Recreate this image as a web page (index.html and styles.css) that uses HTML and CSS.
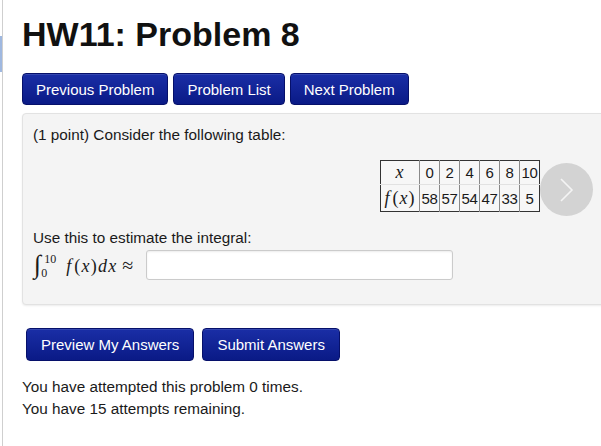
FILE: index.html
```html
<!DOCTYPE html>
<html>
<head>
<meta charset="utf-8">
<link rel="stylesheet" href="styles.css">
</head>
<body>
<div class="edge-mark"></div>
<div class="page">
  <h1 class="title">HW11: Problem 8</h1>
  <div class="nav">
    <button class="btn">Previous Problem</button>
    <button class="btn">Problem List</button>
    <button class="btn">Next Problem</button>
  </div>
  <div class="panel">
    <p class="line">(1 point) Consider the following table:</p>
    <table class="data">
      <tr class="r1">
        <td class="head"><span class="m">x</span></td>
        <td>0</td><td>2</td><td>4</td><td>6</td><td>8</td><td>10</td>
      </tr>
      <tr class="r2">
        <td class="head"><span class="m fx">f</span><span class="mp">(</span><span class="m">x</span><span class="mp">)</span></td>
        <td>58</td><td>57</td><td>54</td><td>47</td><td>33</td><td>5</td>
      </tr>
    </table>
    <p class="line use">Use this to estimate the integral:</p>
    <div class="integral">
      <span class="expr">
        <span class="int">∫</span>
        <span class="limits"><span class="sup">10</span><span class="sub">0</span></span>
        <span class="body"><span class="m fx">f</span><span class="mp">(</span><span class="m">x</span><span class="mp">)</span><span class="m">d</span><span class="m">x</span><span class="approx">≈</span></span>
      </span>
      <input class="answer" type="text">
    </div>
  </div>
  <div class="actions">
    <button class="btn btn-lg">Preview My Answers</button>
    <button class="btn btn-lg">Submit Answers</button>
  </div>
  <p class="info">You have attempted this problem 0 times.<br>You have 15 attempts remaining.</p>
  <div class="next-circle">
    <svg width="53" height="53" viewBox="0 0 53 53"><polyline points="21,16 32,27 21,38" fill="none" stroke="#f4f4f4" stroke-width="1.6"/></svg>
  </div>
</div>
</body>
</html>
```
FILE: styles.css
```css
html, body {
  margin: 0;
  padding: 0;
  background: #fff;
  overflow: hidden;
  width: 601px;
  height: 446px;
}
body {
  font-family: "Liberation Sans", Arial, sans-serif;
  color: #1a1a1a;
  position: relative;
}
.edge-mark {
  position: absolute;
  left: 0;
  top: 36px;
  width: 2px;
  height: 36px;
  background: #9fb8e0;
}
.page {
  position: relative;
  margin-left: 2px;
  border-left: 1px solid #cfcfcf;
  padding-left: 19px;
  height: 446px;
  box-sizing: border-box;
}
.title {
  margin: 0;
  padding-top: 14px;
  font-size: 34px;
  line-height: 40px;
  font-weight: bold;
  color: #111;
}
.nav {
  display: flex;
  gap: 5px;
  margin-top: 19px;
}
.btn {
  font-family: "Liberation Sans", Arial, sans-serif;
  font-size: 15px;
  color: #fff;
  height: 32px;
  padding: 0 13px;
  border: 1px solid #06106a;
  border-radius: 4px;
  background: linear-gradient(#1a2ea6, #0a1a86);
  box-shadow: inset 0 1px 0 rgba(255,255,255,0.12);
}
.btn-lg {
  height: 33px;
  padding: 0 14px;
}
.panel {
  margin-top: 8px;
  width: 600px;
  background: #f4f4f4;
  border: 1px solid #e2e2e2;
  border-radius: 4px;
  box-shadow: 0 1px 2px rgba(0,0,0,0.08);
  padding: 11px 10px 24px 10px;
  box-sizing: border-box;
}
.line {
  margin: 0;
  font-size: 15.3px;
  line-height: 20px;
}
.data {
  margin: 15px 0 0 347px;
  border-collapse: collapse;
  border: 1px solid #333;
  background: #f7f7f7;
}
.data td {
  padding: 0;
  width: 19px;
  text-align: center;
  font-size: 15px;
  border-left: 1px solid #8a8a8a;
  letter-spacing: -0.3px;
}
.data td.head {
  width: 38px;
  border-left: none;
  letter-spacing: 1px;
}
.data .r1 td {
  height: 23px;
  border-bottom: 1px solid #e2e2e2;
}
.data .r2 td {
  height: 26px;
}
.m {
  font-family: "Liberation Serif", "Times New Roman", serif;
  font-style: italic;
  font-size: 18px;
}
.fx {
  margin-right: 2px;
}
.mp {
  font-family: "Liberation Serif", "Times New Roman", serif;
  font-size: 18px;
}
.use {
  margin-top: 16px;
}
.integral {
  display: flex;
  align-items: center;
  margin-top: 2px;
}
.expr {
  display: flex;
  align-items: center;
  width: 113px;
  font-family: "Liberation Serif", "Times New Roman", serif;
}
.int {
  font-size: 26px;
  line-height: 26px;
  font-style: italic;
  margin-left: 1px;
}
.limits {
  display: flex;
  flex-direction: column;
  justify-content: space-between;
  height: 26px;
  font-size: 12px;
  line-height: 12px;
  margin-left: 1px;
  margin-right: 10px;
  padding-top: 2px;
}
.sup {
  margin-left: 2px;
}
.sub {
  margin-left: -1px;
}
.body {
  font-size: 18px;
  letter-spacing: 1.2px;
  padding-top: 1px;
  white-space: nowrap;
}
.approx {
  margin-left: 5px;
  font-size: 20px;
}
.answer {
  width: 307px;
  height: 30px;
  box-sizing: border-box;
  border: 1px solid #cbcbcb;
  border-radius: 3px;
  background: #fff;
  box-shadow: inset 0 1px 2px rgba(0,0,0,0.08);
  margin: 0;
  padding: 0 6px;
}
.actions {
  display: flex;
  gap: 8px;
  margin-top: 23px;
  margin-left: 4px;
}
.info {
  margin: 15px 0 0 0;
  font-size: 15.3px;
  line-height: 22px;
}
.next-circle {
  position: absolute;
  left: 537px;
  top: 163px;
  width: 53px;
  height: 53px;
  border-radius: 50%;
  background: #d3d3d3;
}
.next-circle svg {
  display: block;
}
```
